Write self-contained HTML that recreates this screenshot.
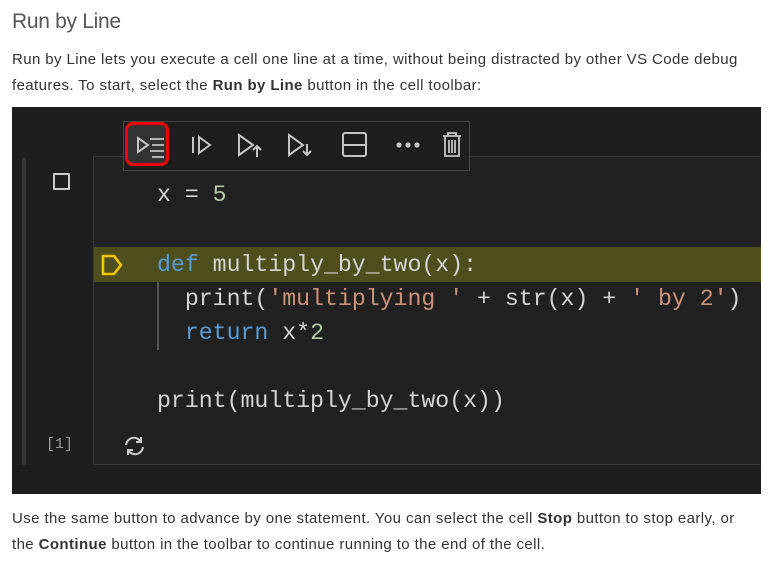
<!DOCTYPE html>
<html><head><meta charset="utf-8"><style>
body{margin:0;width:773px;height:577px;background:#fff;position:relative;overflow:hidden;font-family:"Liberation Sans",sans-serif;}
.t{position:absolute;left:12px;top:10px;font-size:21px;color:#555;font-weight:300;letter-spacing:-0.3px}
.p{position:absolute;left:12px;font-size:15px;color:#333;line-height:26px;white-space:nowrap;letter-spacing:0.4px}
.dark{position:absolute;left:12px;top:107px;width:749px;height:387px;background:#1e1e1e;overflow:hidden}
.code{position:absolute;font-family:"Liberation Mono",monospace;font-size:23.2px;color:#d4d4d4;white-space:pre;line-height:34px}
.k{color:#569cd6}.s{color:#ce9178}.n{color:#b5cea8}
</style></head><body>
<div class="t">Run by Line</div>
<div class="p" style="top:47px">Run by Line lets you execute a cell one line at a time, without being distracted by other VS Code debug<br>features. To start, select the <b>Run by Line</b> button in the cell toolbar:</div>
<div class="dark">
  <div style="position:absolute;left:10px;top:51px;width:4px;height:307px;background:#353535"></div>
  <div style="position:absolute;left:81px;top:49px;width:700px;height:307px;border:1px solid #3a3a3a;background:#212121"></div>
  <div style="position:absolute;left:41px;top:66px;width:13px;height:13px;border:2px solid #ccc;border-radius:1px"></div>
  <div style="position:absolute;left:82px;top:140px;width:700px;height:35px;background:#4f4f1e"></div>
  <div style="position:absolute;left:145px;top:175px;width:2px;height:68px;background:#555"></div>
  <svg style="position:absolute;left:88px;top:146px" width="26" height="24"><path d="M3 3 H14 L21 12 L14 21 H3 Z" fill="none" stroke="#f5c400" stroke-width="2.6" stroke-linejoin="round"/></svg>
  <div class="code" style="left:145px;top:71px">x = <span class="n">5</span></div>
  <div class="code" style="left:145px;top:141px"><span class="k">def</span> multiply_by_two(x):
  print(<span class="s">'multiplying '</span> + str(x) + <span class="s">' by 2'</span>)
  <span class="k">return</span> x*<span class="n">2</span>

print(multiply_by_two(x))</div>
  <div style="position:absolute;left:34px;top:329px;font-family:'Liberation Mono',monospace;font-size:15px;color:#999">[1]</div>
  <svg style="position:absolute;left:110px;top:327px" width="26" height="24" fill="none" stroke="#ccc" stroke-width="2"><path d="M4 11 A8 8 0 0 1 19 8"/><path d="M19 3 V8 H14"/><path d="M21 13 A8 8 0 0 1 6 16"/><path d="M6 21 V16 H11"/></svg>
  <div style="position:absolute;left:111px;top:14px;width:345px;height:48px;border:1px solid #454545;background:#1e1e1e"></div>
  <div style="position:absolute;left:113px;top:15px;width:44px;height:44px;border:3px solid #e00;border-radius:8px;box-sizing:border-box;background:#333"></div>
  <svg style="position:absolute;left:111px;top:14px" width="346" height="48" fill="none" stroke="#c5c5c5" stroke-width="2">
    <path d="M15 17 L25 24 L15 31 Z"/><path d="M27 18 H41 M29 24 H41 M27 30 H41 M29 36 H41" stroke-width="1.8"/>
    <path d="M70 16 V32 M76 16 L87 24 L76 32 Z"/>
    <path d="M116 14 L130 24 L116 34 Z M134 36 V25 M130 29 L134 25 L138 29"/>
    <path d="M166 14 L180 24 L166 34 Z M184 23 V34 M180 30 L184 34 L188 30"/>
    <rect x="220" y="12" width="23" height="23" rx="2"/><path d="M220 24 H243"/>
    <circle cx="276" cy="24" r="1.6" fill="#c5c5c5"/><circle cx="285" cy="24" r="1.6" fill="#c5c5c5"/><circle cx="294" cy="24" r="1.6" fill="#c5c5c5"/>
    <path d="M320 15 H338 M325 15 V12 H333 V15 M322 15 V35 H336 V15 M326 19 V32 M329 19 V32 M332 19 V32" stroke-width="1.8"/>
  </svg>
</div>
<div class="p" style="top:506px">Use the same button to advance by one statement. You can select the cell <b>Stop</b> button to stop early, or<br>the <b>Continue</b> button in the toolbar to continue running to the end of the cell.</div>
</body></html>
